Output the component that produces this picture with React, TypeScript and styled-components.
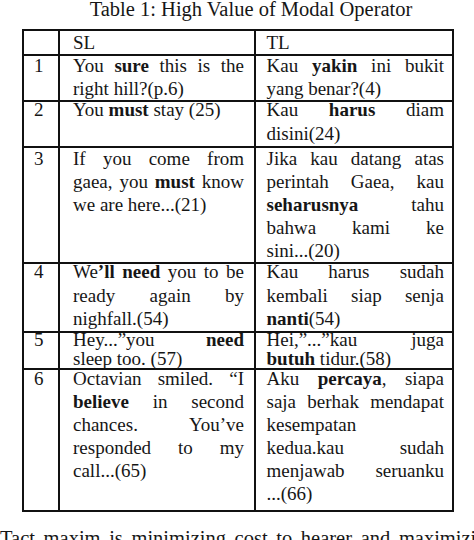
import styled, { createGlobalStyle } from "styled-components";

const GlobalStyle = createGlobalStyle`
  html, body {
    margin: 0;
    padding: 0;
    background: #ffffff;
  }
  body {
    font-family: "Liberation Serif", "Times New Roman", serif;
    color: #161616;
    overflow: hidden;
  }
`;

const Page = styled.div`
  width: 474px;
  height: 540px;
  overflow: hidden;
`;

const Caption = styled.div`
  font-size: 20.5px;
  line-height: 18px;
  height: 18px;
  text-align: center;
  padding-left: 28px;
  white-space: nowrap;
`;

const Table = styled.div`
  margin: 11px 0 0 22px;
  width: 432px;
  box-sizing: border-box;
  border-left: 2px solid #111;
  border-top: 2px solid #111;
`;

const Row = styled.div<{ $height: number }>`
  display: grid;
  grid-template-columns: 36px 196px 198px;
  height: ${(p) => p.$height}px;
`;

const Cell = styled.div<{ $pl: number; $pr: number; $lead: number }>`
  box-sizing: border-box;
  border-right: 2px solid #111;
  border-bottom: 2px solid #111;
  padding: 0 ${(p) => p.$pr}px 0 ${(p) => p.$pl}px;
  font-size: 19px;
  line-height: ${(p) => p.$lead}px;
  overflow: visible;
`;

const Line = styled.span<{ $last: boolean }>`
  display: block;
  text-align: justify;
  text-align-last: ${(p) => (p.$last ? "left" : "justify")};
`;

const Strong = styled.b`
  font-weight: 700;
`;

const Footer = styled.p`
  margin: 14px 0 0 0;
  font-size: 20.5px;
  line-height: 24px;
  white-space: nowrap;
  word-spacing: 3.5px;
`;

type RowData = {
  num: string;
  sl: string[];
  tl: string[];
  height: number;
  lead: number;
};

const rows: RowData[] = [
  { num: "", sl: ["SL"], tl: ["TL"], height: 23, lead: 23 },
  {
    num: "1",
    sl: ["You **sure** this is the", "right hill?(p.6)"],
    tl: ["Kau **yakin** ini bukit", "yang benar?(4)"],
    height: 44,
    lead: 23,
  },
  {
    num: "2",
    sl: ["You **must** stay (25)"],
    tl: ["Kau **harus** diam", "disini(24)"],
    height: 49,
    lead: 24,
  },
  {
    num: "3",
    sl: ["If you come from", "gaea, you **must** know", "we are here...(21)"],
    tl: [
      "Jika kau datang atas",
      "perintah Gaea, kau",
      "**seharusnya** tahu",
      "bahwa kami ke",
      "sini...(20)",
    ],
    height: 113,
    lead: 23,
  },
  {
    num: "4",
    sl: ["We**\u2019ll need** you to be", "ready again by", "nighfall.(54)"],
    tl: ["Kau harus sudah", "kembali siap senja", "**nanti**(54)"],
    height: 70,
    lead: 23.5,
  },
  {
    num: "5",
    sl: ["Hey...\u201dyou **need**", "sleep too. (57)"],
    tl: ["Hei,\u201d...\u201dkau juga", "**butuh** tidur.(58)"],
    height: 37,
    lead: 19,
  },
  {
    num: "6",
    sl: [
      "Octavian smiled. \u201cI",
      "**believe** in second",
      "chances. You\u2019ve",
      "responded to my",
      "call...(65)",
    ],
    tl: [
      "Aku **percaya**, siapa",
      "saja berhak mendapat",
      "kesempatan",
      "kedua.kau sudah",
      "menjawab seruanku",
      "...(66)",
    ],
    height: 145,
    lead: 23,
  },
];

function renderText(text: string) {
  return text.split("**").map((part, i) =>
    i % 2 === 1 ? <Strong key={i}>{part}</Strong> : <span key={i}>{part}</span>
  );
}

function Lines({ lines }: { lines: string[] }) {
  return (
    <>
      {lines.map((line, i) => (
        <Line key={i} $last={i === lines.length - 1}>
          {renderText(line)}
        </Line>
      ))}
    </>
  );
}

export default function App() {
  return (
    <Page>
      <GlobalStyle />
      <Caption>Table 1: High Value of Modal Operator</Caption>
      <Table>
        {rows.map((row, i) => (
          <Row key={i} $height={row.height}>
            <Cell $pl={10} $pr={2} $lead={row.lead}>
              {row.num}
            </Cell>
            <Cell $pl={13} $pr={10} $lead={row.lead}>
              <Lines lines={row.sl} />
            </Cell>
            <Cell $pl={10.5} $pr={8} $lead={row.lead}>
              <Lines lines={row.tl} />
            </Cell>
          </Row>
        ))}
      </Table>
      <Footer>
        Tact maxim is minimizing cost to hearer and maximizing benefit to hearer
      </Footer>
    </Page>
  );
}
